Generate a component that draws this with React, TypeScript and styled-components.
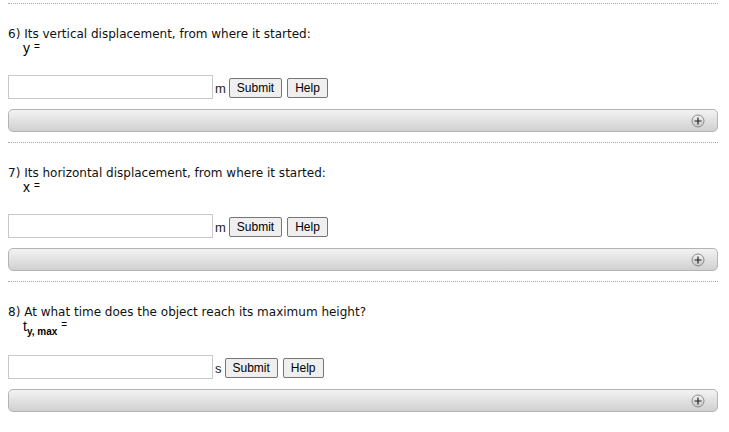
import styled, { createGlobalStyle } from 'styled-components';

const GlobalStyle = createGlobalStyle`
  body {
    margin: 0;
    padding: 0 11px 0 8px;
    background: #fff;
    font-family: "DejaVu Sans", Tahoma, sans-serif;
    color: #000;
  }
`;

const Page = styled.div`
  padding-top: 3px;
`;

const Block = styled.section`
  border-top: 1px dotted #a8a8a8;
  padding: 24px 0 10px;
`;

const Question = styled.div`
  font-size: 12px;
  line-height: 13px;
  color: #111;
`;

const Variable = styled.div`
  font-family: "Liberation Sans", Arial, sans-serif;
  font-size: 14px;
  line-height: 14px;
  margin-left: 15px;
  sub {
    font-size: 10px;
    font-weight: bold;
    vertical-align: -4px;
    line-height: 0;
  }
  span {
    font-size: 10px;
    line-height: 0;
    vertical-align: 3px;
  }
`;

const AnswerRow = styled.div<{ $top: number }>`
  display: flex;
  align-items: center;
  margin-top: ${(p) => p.$top}px;
  font-family: "Liberation Sans", Arial, sans-serif;
`;

const Input = styled.input`
  box-sizing: border-box;
  width: 205px;
  height: 24px;
  margin: 0;
  border: 1px solid #c8c8c8;
  border-radius: 0;
`;

const Unit = styled.span`
  font-size: 13px;
  color: #222;
  margin: 2px 3px 0 2px;
`;

const Button = styled.button`
  box-sizing: border-box;
  height: 20px;
  margin: 2px 5px 0 0;
  padding: 0 7px;
  font-family: "Liberation Sans", Arial, sans-serif;
  font-size: 12px;
  color: #000;
  background: #efefef;
  border: 1px solid #767676;
  border-radius: 2px;
`;

const Bar = styled.div`
  box-sizing: border-box;
  height: 23px;
  margin-top: 10px;
  display: flex;
  align-items: center;
  justify-content: flex-end;
  padding-right: 12px;
  border: 1px solid #b4b4b4;
  border-radius: 5px;
  background: linear-gradient(#f3f3f3, #d0d0d0);
`;

const PlusIcon = () => (
  <svg width="14" height="14" viewBox="0 0 14 14">
    <defs>
      <linearGradient id="pg" x1="0" y1="0" x2="0" y2="1">
        <stop offset="0" stopColor="#f6f6f6" />
        <stop offset="1" stopColor="#c4c4c4" />
      </linearGradient>
    </defs>
    <circle cx="7" cy="7" r="6" fill="url(#pg)" stroke="#8a8a8a" strokeWidth="1" />
    <path d="M7 3.5v7M3.5 7h7" stroke="#222" strokeWidth="1.2" />
  </svg>
);

const blocks = [
  { q: '6) Its vertical displacement, from where it started:', v: <>y <span>=</span></>, unit: 'm', top: 20 },
  { q: '7) Its horizontal displacement, from where it started:', v: <>x <span>=</span></>, unit: 'm', top: 20 },
  { q: '8) At what time does the object reach its maximum height?', v: <>t<sub>y, max</sub> <span>=</span></>, unit: 's', top: 22 },
];

export default function App() {
  return (
    <Page>
      <GlobalStyle />
      {blocks.map((b, i) => (
        <Block key={i}>
          <Question>{b.q}</Question>
          <Variable>{b.v}</Variable>
          <AnswerRow $top={b.top}>
            <Input type="text" />
            <Unit>{b.unit}</Unit>
            <Button>Submit</Button>
            <Button>Help</Button>
          </AnswerRow>
          <Bar>
            <PlusIcon />
          </Bar>
        </Block>
      ))}
    </Page>
  );
}
